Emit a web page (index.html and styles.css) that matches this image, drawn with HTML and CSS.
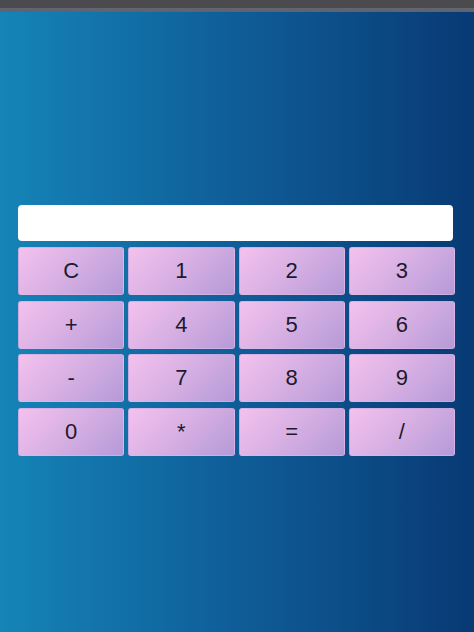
FILE: index.html
```html
<!DOCTYPE html>
<html lang="en">
<head>
<meta charset="utf-8">
<title>Calculator</title>
<link rel="stylesheet" href="styles.css">
</head>
<body>
<div class="topbar"><div class="topbar-line"></div></div>
<main class="page">
  <div class="calc">
    <div class="display"></div>
    <div class="keys">
      <button class="key">C</button>
      <button class="key">1</button>
      <button class="key">2</button>
      <button class="key">3</button>
      <button class="key">+</button>
      <button class="key">4</button>
      <button class="key">5</button>
      <button class="key">6</button>
      <button class="key">-</button>
      <button class="key">7</button>
      <button class="key">8</button>
      <button class="key">9</button>
      <button class="key">0</button>
      <button class="key">*</button>
      <button class="key">=</button>
      <button class="key">/</button>
    </div>
  </div>
</main>
</body>
</html>
```
FILE: styles.css
```css
html, body {
  margin: 0;
  padding: 0;
}
body {
  width: 474px;
  height: 632px;
  overflow: hidden;
  font-family: "Liberation Sans", Arial, sans-serif;
}
.topbar {
  height: 12px;
  background: #4a4a4f;
  position: relative;
}
.topbar-line {
  position: absolute;
  left: 0;
  right: 0;
  bottom: 0;
  height: 4px;
  background: linear-gradient(to bottom, #65656b, #5a6478);
}
.page {
  height: 620px;
  background: linear-gradient(to right, #1584b7, #0f5d98 50%, #083a74);
  padding-top: 193px;
  box-sizing: border-box;
}
.calc {
  margin-left: 18px;
  width: 437px;
  display: flex;
  flex-direction: column;
  gap: 6px;
}
.display {
  width: 435px;
  height: 36px;
  background: #ffffff;
  border-radius: 4px;
}
.keys {
  display: grid;
  grid-template-columns: repeat(4, 1fr);
  grid-auto-rows: 48px;
  column-gap: 4px;
  row-gap: 5.67px;
}
.key {
  margin: 0;
  padding: 0;
  border: 1px solid rgba(205, 175, 230, 0.55);
  border-radius: 3px;
  background: linear-gradient(135deg, #f4c1ed, #d6afe3 50%, #b59ad7);
  font-family: "Liberation Sans", Arial, sans-serif;
  font-size: 22px;
  color: #1c1a2c;
  display: flex;
  align-items: center;
  justify-content: center;
}
```
